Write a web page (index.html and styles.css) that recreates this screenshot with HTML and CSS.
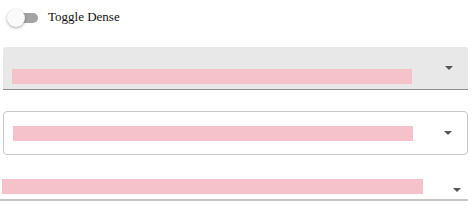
FILE: index.html
```html
<!DOCTYPE html>
<html>
<head>
<meta charset="utf-8">
<link rel="stylesheet" href="styles.css">
</head>
<body>
<div class="page">
  <div class="toggle-row">
    <span class="switch"><span class="track"></span><span class="thumb"></span></span>
    <span class="label">Toggle Dense</span>
  </div>
  <div class="select filled">
    <span class="bar"></span>
    <span class="arrow"></span>
  </div>
  <div class="select outlined">
    <span class="bar"></span>
    <span class="arrow"></span>
  </div>
  <div class="select standard">
    <span class="bar"></span>
    <span class="arrow"></span>
  </div>
</div>
</body>
</html>
```
FILE: styles.css
```css
html, body {
  margin: 0;
  padding: 0;
  background: #ffffff;
}
.page {
  padding-top: 8px;
  font-family: "Liberation Serif", "Times New Roman", serif;
}
.toggle-row {
  display: flex;
  align-items: center;
  height: 20px;
  margin-left: 7px;
  gap: 10px;
}
.switch {
  position: relative;
  width: 31px;
  height: 20px;
  display: inline-block;
}
.track {
  position: absolute;
  left: 3px;
  top: 5px;
  width: 28px;
  height: 10px;
  border-radius: 5px;
  background: #a3a3a3;
}
.thumb {
  position: absolute;
  left: 0;
  top: 1px;
  width: 18px;
  height: 18px;
  border-radius: 50%;
  background: #fafafa;
  box-shadow: 0 1px 3px rgba(0,0,0,0.35);
}
.label {
  font-size: 13px;
  color: #111;
  position: relative;
  top: -1px;
}
.select {
  display: flex;
  align-items: center;
  box-sizing: border-box;
  margin-left: 3px;
  width: 465px;
}
.bar {
  display: block;
  height: 15px;
  background: #f5c1cb;
}
.arrow {
  width: 0;
  height: 0;
  border-left: 4px solid transparent;
  border-right: 4px solid transparent;
  border-top: 4px solid #555;
  margin-left: auto;
}
.filled {
  margin-top: 19px;
  height: 43px;
  background: #e8e8e8;
  border-bottom: 1px solid #8e8e8e;
  border-radius: 3px 3px 0 0;
  padding: 0 15px 0 9px;
}
.filled .bar {
  width: 400px;
  align-self: flex-end;
  margin-bottom: 5px;
}
.outlined {
  margin-top: 21px;
  height: 44px;
  border: 1px solid #c8c8c8;
  border-radius: 4px;
  padding: 0 15px 0 9px;
}
.outlined .bar { width: 400px; }
.standard {
  margin-top: 22px;
  margin-left: 0;
  width: 468px;
  height: 24px;
  border-bottom: 2px solid #c4c4c4;
  padding: 0 7px 3px 2px;
}
.standard .bar { width: 421px; }
.standard .arrow { margin-top: 6px; }
```
